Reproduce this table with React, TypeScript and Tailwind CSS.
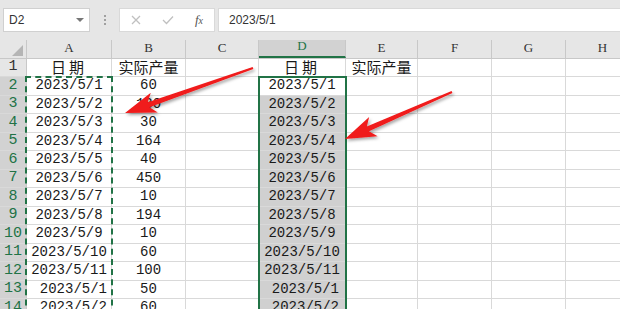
import React from "react";

const cols = ["A", "B", "C", "D", "E", "F", "G", "H"];
const colWidths = [85, 74, 73, 87, 72, 74, 74, 74];

type Row = { a: string; b: string; d: string; right?: boolean };

const rows: Row[] = [
  { a: "2023/5/1", b: "60", d: "2023/5/1" },
  { a: "2023/5/2", b: "130", d: "2023/5/2" },
  { a: "2023/5/3", b: "30", d: "2023/5/3" },
  { a: "2023/5/4", b: "164", d: "2023/5/4" },
  { a: "2023/5/5", b: "40", d: "2023/5/5" },
  { a: "2023/5/6", b: "450", d: "2023/5/6" },
  { a: "2023/5/7", b: "10", d: "2023/5/7" },
  { a: "2023/5/8", b: "194", d: "2023/5/8" },
  { a: "2023/5/9", b: "10", d: "2023/5/9" },
  { a: "2023/5/10", b: "60", d: "2023/5/10" },
  { a: "2023/5/11", b: "100", d: "2023/5/11" },
  { a: "2023/5/1", b: "50", d: "2023/5/1", right: true },
  { a: "2023/5/2", b: "60", d: "2023/5/2", right: true },
];

// arrow polygon, thin tail widening into a notched head
function arrowPoints(x1: number, y1: number, x2: number, y2: number) {
  const dx = x2 - x1;
  const dy = y2 - y1;
  const len = Math.hypot(dx, dy);
  const ux = dx / len;
  const uy = dy / len;
  const nx = -uy;
  const ny = ux;
  const headLen = 31;
  const headW = 10.5;
  const notch = 25;
  const p = (along: number, side: number) =>
    `${x1 + ux * along + nx * side},${y1 + uy * along + ny * side}`;
  return [
    p(0, 1),
    p(len - notch, 2.6),
    p(len - headLen, headW),
    p(len, 0),
    p(len - headLen, -headW),
    p(len - notch, -2.6),
    p(0, -1),
  ].join(" ");
}

function Cell({
  w,
  children,
  className = "",
}: {
  w: number;
  children?: React.ReactNode;
  className?: string;
}) {
  return (
    <div
      className={`h-full shrink-0 border-r border-[#d9d9d9] flex items-center overflow-visible whitespace-nowrap ${className}`}
      style={{ width: w }}
    >
      {children}
    </div>
  );
}

export default function App() {
  return (
    <div className="relative w-[620px] h-[309px] overflow-hidden bg-white text-[#1a1a1a]">
      {/* formula bar */}
      <div className="h-[40px] bg-[#e6e6e6] flex items-start pt-[8px] pl-[3px] font-['Liberation_Sans',sans-serif]">
        <div className="w-[87px] h-[24px] bg-white border border-[#d0d0d0] flex items-center pl-[5px] pr-[5px] text-[12px] text-[#333]">
          <span className="flex-1">D2</span>
          <svg width="8" height="5" viewBox="0 0 8 5">
            <path d="M0 0 L8 0 L4 4 Z" fill="#777" />
          </svg>
        </div>
        <div className="w-[29px] h-[24px] flex items-center justify-center">
          <div className="flex flex-col gap-[2px]">
            <span className="w-[2px] h-[2px] bg-[#a0a0a0]" />
            <span className="w-[2px] h-[2px] bg-[#a0a0a0]" />
            <span className="w-[2px] h-[2px] bg-[#a0a0a0]" />
          </div>
        </div>
        <div className="w-[96px] h-[24px] bg-white border border-[#d9d9d9] flex items-center">
          <div className="w-[32px] flex justify-center">
            <svg width="10" height="10" viewBox="0 0 10 10">
              <path d="M1 1 L9 9 M9 1 L1 9" stroke="#c0c0c0" strokeWidth="1.3" />
            </svg>
          </div>
          <div className="w-[32px] flex justify-center">
            <svg width="12" height="10" viewBox="0 0 12 10">
              <path d="M1 5 L4.5 8.5 L11 1.5" stroke="#c0c0c0" strokeWidth="1.3" fill="none" />
            </svg>
          </div>
          <div className="w-[30px] flex justify-center font-['Liberation_Serif',serif] italic text-[13px] text-[#555]">
            f<span className="text-[10px] mt-[3px]">x</span>
          </div>
        </div>
        <div className="ml-[3px] flex-1 h-[24px] bg-white border-y border-l border-[#d9d9d9] flex items-center pl-[10px] text-[12px] text-[#333]">
          2023/5/1
        </div>
      </div>

      {/* grid */}
      <div className="font-['Liberation_Mono','Noto_Sans_CJK_SC',monospace] text-[14px]">
        {/* column headers */}
        <div className="h-[18.5px] flex bg-[#e6e6e6] border-b border-[#c8c8c8] font-['Liberation_Serif',serif] text-[13px] text-[#333]">
          <div className="w-[27px] shrink-0 h-full border-r border-[#c8c8c8] relative">
            <svg className="absolute right-[3px] bottom-[2px]" width="11" height="11" viewBox="0 0 11 11">
              <path d="M11 0 L11 11 L0 11 Z" fill="#b5b5b5" />
            </svg>
          </div>
          {cols.map((c, i) => (
            <div
              key={c}
              className={`h-full shrink-0 border-r border-[#c8c8c8] flex items-end justify-center ${
                c === "D" ? "bg-[#d2d2d2] text-[#217346] border-b-2 border-b-[#217346]" : ""
              }`}
              style={{ width: colWidths[i] }}
            >
              {c}
            </div>
          ))}
        </div>

        {/* row 1 */}
        <div className="h-[18.5px] flex border-b border-[#d9d9d9]">
          <div className="w-[27px] shrink-0 h-full bg-[#e6e6e6] border-r border-[#c8c8c8] flex items-center justify-center text-[15px] text-[#333]">
            1
          </div>
          <Cell w={85} className="justify-center font-['Noto_Sans_CJK_SC',sans-serif] text-[15px] tracking-[3px]">日期</Cell>
          <Cell w={74} className="justify-center font-['Noto_Sans_CJK_SC',sans-serif] text-[15px]">实际产量</Cell>
          <Cell w={73} />
          <Cell w={87} className="justify-center font-['Noto_Sans_CJK_SC',sans-serif] text-[15px] tracking-[3px]">日期</Cell>
          <Cell w={72} className="justify-center font-['Noto_Sans_CJK_SC',sans-serif] text-[15px]">实际产量</Cell>
          <Cell w={74} />
          <Cell w={74} />
          <Cell w={74} />
        </div>

        {rows.map((r, i) => (
          <div key={i} className="h-[18.5px] flex border-b border-[#d9d9d9]">
            <div className="w-[27px] shrink-0 h-full bg-[#d2d2d2] border-r border-[#c8c8c8] flex items-center justify-center text-[15px] text-[#217346]">
              {i + 2}
            </div>
            <Cell w={85} className={r.right ? "justify-end pr-[4px]" : "justify-center"}>
              {r.a}
            </Cell>
            <Cell w={74} className="justify-center">
              {r.b}
            </Cell>
            <Cell w={73} />
            <Cell
              w={87}
              className={`${i === 0 ? "bg-white" : "bg-[#d0d0d0]"} ${r.right ? "justify-end pr-[6px]" : "justify-center"}`}
            >
              {r.d}
            </Cell>
            <Cell w={72} />
            <Cell w={74} />
            <Cell w={74} />
            <Cell w={74} />
          </div>
        ))}
      </div>

      {/* copy marquee around A2:A14 */}
      <div className="absolute left-[25px] top-[76px] w-[88px] h-[260px] border-2 border-dashed border-[#217346]" />
      {/* selection D2:D14 */}
      <div className="absolute left-[258px] top-[76px] w-[89px] h-[260px] border-2 border-[#217346]" />

      {/* arrows */}
      <svg className="absolute inset-0" width="620" height="309" viewBox="0 0 620 309">
        <defs>
          <filter id="sh" x="-20%" y="-20%" width="140%" height="140%">
            <feDropShadow dx="1.5" dy="2" stdDeviation="1.5" floodColor="#000" floodOpacity="0.35" />
          </filter>
        </defs>
        <polygon points={arrowPoints(253, 68, 125, 113)} fill="#f01a1a" filter="url(#sh)" />
        <polygon points={arrowPoints(452, 92, 345, 139)} fill="#f01a1a" filter="url(#sh)" />
      </svg>
    </div>
  );
}
